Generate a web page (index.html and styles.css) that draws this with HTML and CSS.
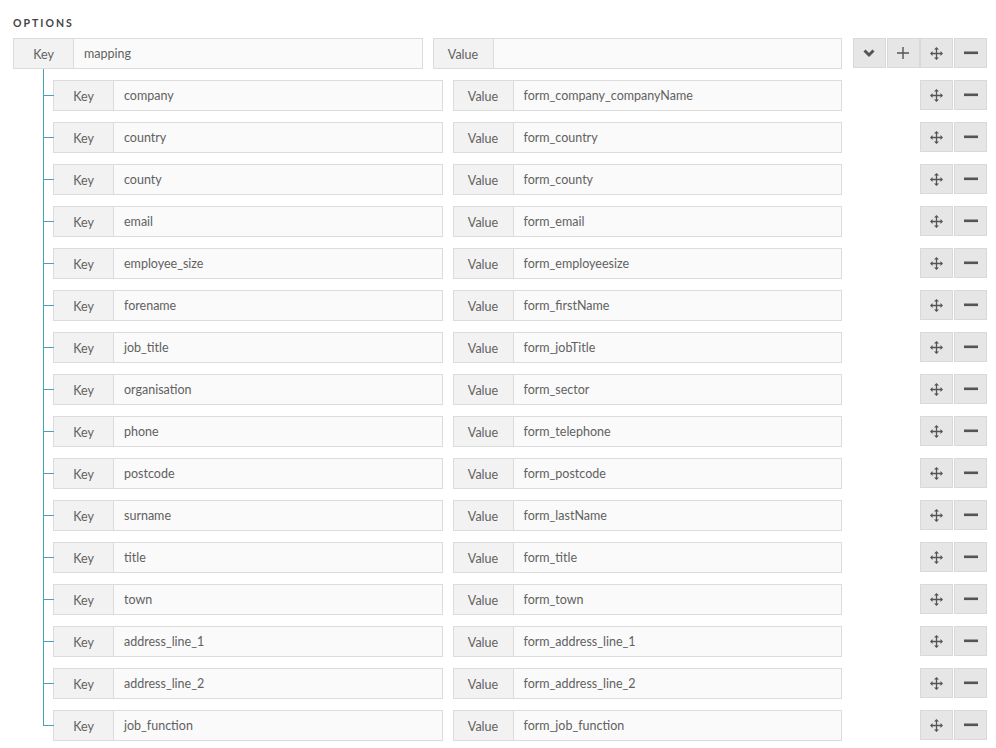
FILE: index.html
```html
<!DOCTYPE html>
<html>
<head>
<meta charset="utf-8">
<link rel="stylesheet" href="styles.css">
</head>
<body>
<div class="panel">
  <div class="title">OPTIONS</div>
  <div class="row root">
    <div class="pair">
      <div class="field"><span class="label">Key</span><span class="input">mapping</span></div>
      <div class="field"><span class="label">Value</span><span class="input"></span></div>
    </div>
    <div class="actions">
      <span class="btn"><svg width="12" height="10" viewBox="0 0 12 10"><path d="M1.5 2.5 L6 7 L10.5 2.5" fill="none" stroke="#555" stroke-width="3"/></svg></span>
      <span class="btn"><svg width="14" height="14" viewBox="0 0 14 14"><path d="M7 1 V13 M1 7 H13" stroke="#555" stroke-width="1.4"/></svg></span>
      <span class="btn move"><svg width="13" height="13" viewBox="0 0 13 13"><path d="M6.5 1.5 V11.5 M1.5 6.5 H11.5" stroke="#555" stroke-width="1.3"/><path d="M6.5 0 L9 2.5 H4 Z M6.5 13 L9 10.5 H4 Z M0 6.5 L2.5 4 V9 Z M13 6.5 L10.5 4 V9 Z" fill="#555"/></svg></span>
      <span class="btn"><svg width="14" height="4" viewBox="0 0 14 4"><rect x="0" y="0.5" width="14" height="2.6" fill="#555"/></svg></span>
    </div>
  </div>
  <div class="children" id="children"></div>
</div>
<script>
var data=[["company","form_company_companyName"],["country","form_country"],["county","form_county"],["email","form_email"],["employee_size","form_employeesize"],["forename","form_firstName"],["job_title","form_jobTitle"],["organisation","form_sector"],["phone","form_telephone"],["postcode","form_postcode"],["surname","form_lastName"],["title","form_title"],["town","form_town"],["address_line_1","form_address_line_1"],["address_line_2","form_address_line_2"],["job_function","form_job_function"]];
var mv='<span class="btn move"><svg width="13" height="13" viewBox="0 0 13 13"><path d="M6.5 1.5 V11.5 M1.5 6.5 H11.5" stroke="#555" stroke-width="1.3"/><path d="M6.5 0 L9 2.5 H4 Z M6.5 13 L9 10.5 H4 Z M0 6.5 L2.5 4 V9 Z M13 6.5 L10.5 4 V9 Z" fill="#555"/></svg></span>';
var mn='<span class="btn"><svg width="14" height="4" viewBox="0 0 14 4"><rect x="0" y="0.5" width="14" height="2.6" fill="#555"/></svg></span>';
var h='';
data.forEach(function(d){
h+='<div class="row child"><div class="pair"><div class="field"><span class="label">Key</span><span class="input">'+d[0]+'</span></div><div class="field"><span class="label">Value</span><span class="input">'+d[1]+'</span></div></div><div class="actions">'+mv+mn+'</div></div>';
});
document.getElementById('children').innerHTML=h;
</script>
</body>
</html>
```
FILE: styles.css
```css
html, body {
  margin: 0;
  padding: 0;
  background: #fff;
}
body {
  font-family: "Lato", "Open Sans", sans-serif;
  font-size: 12.5px;
  color: #616161;
}
.panel {
  padding: 16px 9px 0 13px;
}
.title {
  font-size: 10.5px;
  font-weight: 700;
  letter-spacing: 2px;
  color: #444;
  line-height: 14px;
  height: 22px;
}
.row {
  display: flex;
  align-items: flex-start;
}
.pair {
  flex: 1;
  display: flex;
  gap: 10px;
}
.field {
  flex: 1;
  display: flex;
  height: 29px;
  border: 1px solid #dcdcdc;
  background: #fafafa;
}
.label {
  width: 59px;
  flex: none;
  border-right: 1px solid #dcdcdc;
  background: #f2f2f2;
  text-align: center;
  line-height: 31px;
}
.input {
  flex: 1;
  padding-left: 10px;
  line-height: 30px;
  white-space: nowrap;
  overflow: hidden;
}
.actions {
  width: 145px;
  flex: none;
  display: flex;
  justify-content: flex-end;
}
.btn {
  width: 31px;
  height: 28px;
  border: 1px solid #d9d9d9;
  background: #e6e6e6;
  display: flex;
  align-items: center;
  justify-content: center;
  margin-left: 0.7px;
}
.btn:first-child {
  margin-left: 0;
}
.children {
  padding-left: 40px;
}
.child {
  position: relative;
  margin-top: 11px;
}
.child::before {
  content: "";
  position: absolute;
  left: -10px;
  top: -11px;
  width: 10px;
  height: 26px;
  border-left: 1px solid #4aa2b7;
  border-bottom: 1px solid #4aa2b7;
}
.child:not(:last-child)::after {
  content: "";
  position: absolute;
  left: -10px;
  top: 15px;
  bottom: -11px;
  border-left: 1px solid #4aa2b7;
}
```
